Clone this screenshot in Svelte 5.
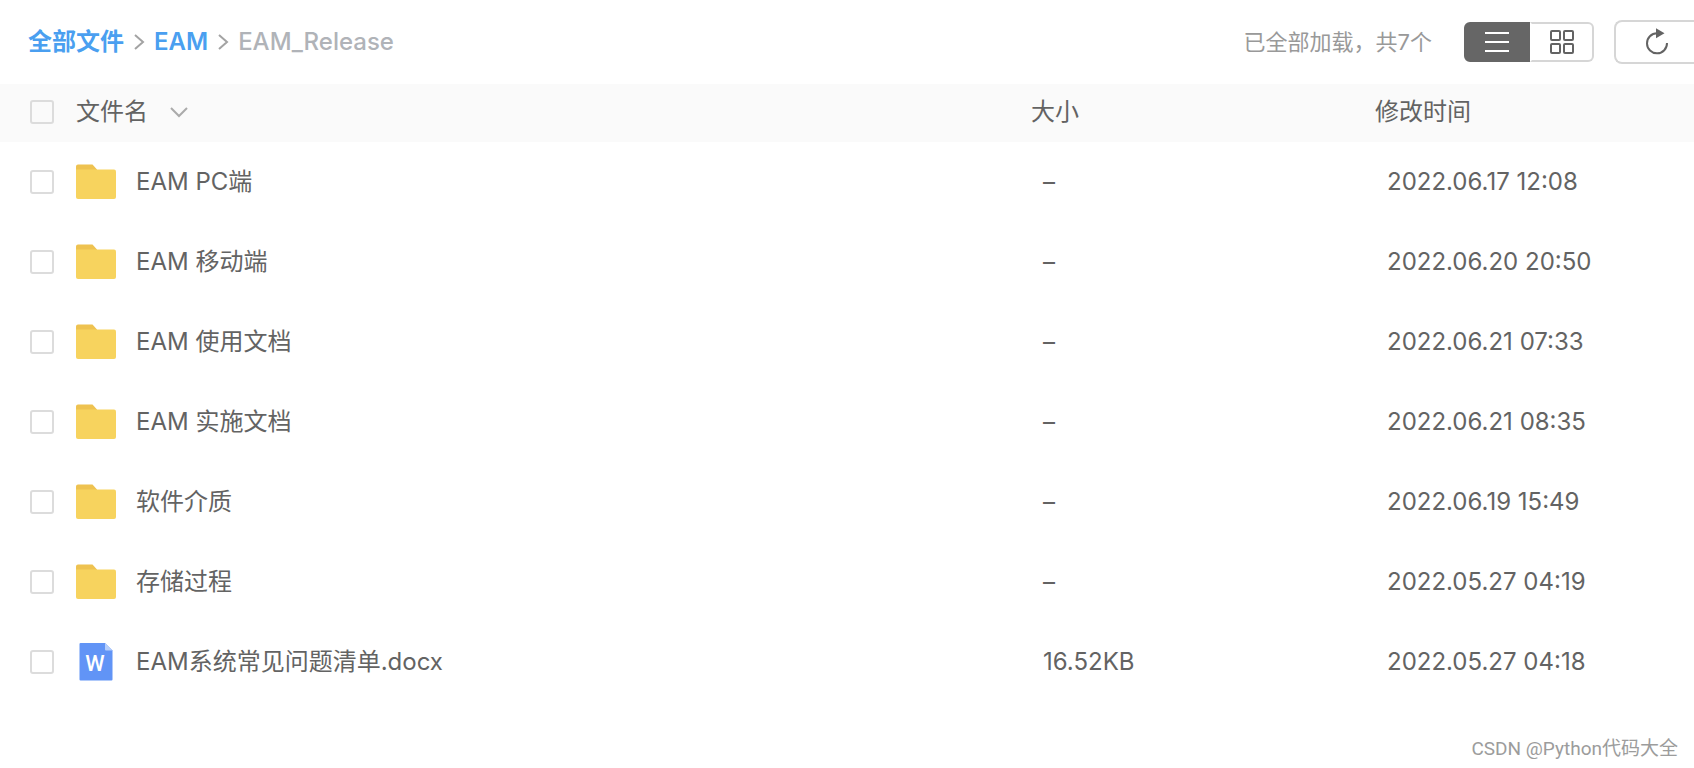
<!--
  Cloud drive folder view: breadcrumb and view controls on top,
  then a selectable table of folders and files.
-->
<script lang="ts">
  type Entry = { name: string; kind: 'folder' | 'doc'; size: string; modified: string };

  const entries: Entry[] = [
    { name: 'EAM PC端', kind: 'folder', size: '–', modified: '2022.06.17 12:08' },
    { name: 'EAM 移动端', kind: 'folder', size: '–', modified: '2022.06.20 20:50' },
    { name: 'EAM 使用文档', kind: 'folder', size: '–', modified: '2022.06.21 07:33' },
    { name: 'EAM 实施文档', kind: 'folder', size: '–', modified: '2022.06.21 08:35' },
    { name: '软件介质', kind: 'folder', size: '–', modified: '2022.06.19 15:49' },
    { name: '存储过程', kind: 'folder', size: '–', modified: '2022.05.27 04:19' },
    { name: 'EAM系统常见问题清单.docx', kind: 'doc', size: '16.52KB', modified: '2022.05.27 04:18' },
  ];

  let view = $state('list');
  let selected = $state(entries.map(() => false));
  const allSelected = $derived(selected.every(Boolean));

  function toggleAll() {
    const next = !allSelected;
    selected = entries.map(() => next);
  }
</script>

{#snippet separator()}
  <svg class="sep" viewBox="0 0 12 16" width="12" height="16" aria-hidden="true"><path d="M2 1l8 7-8 7" /></svg>
{/snippet}

<div class="page">
  <header class="toolbar">
    <nav class="crumbs">
      <a href="#all">全部文件</a>
      {@render separator()}
      <a href="#eam">EAM</a>
      {@render separator()}
      <span class="current">EAM_Release</span>
    </nav>

    <span class="status">已全部加载，共{entries.length}个</span>

    <div class="views">
      <button type="button" class:active={view === 'list'} aria-label="列表" onclick={() => (view = 'list')}>
        <svg viewBox="0 0 24 24" width="24" height="24" aria-hidden="true"><path d="M0 3h24M0 12h24M0 21h24" /></svg>
      </button>
      <button type="button" class:active={view === 'grid'} aria-label="网格" onclick={() => (view = 'grid')}>
        <svg viewBox="0 0 24 24" width="24" height="24" aria-hidden="true">
          <rect x="1" y="1" width="9" height="9" rx="1" />
          <rect x="14" y="1" width="9" height="9" rx="1" />
          <rect x="1" y="14" width="9" height="9" rx="1" />
          <rect x="14" y="14" width="9" height="9" rx="1" />
        </svg>
      </button>
    </div>

    <button type="button" class="refresh" aria-label="刷新">
      <svg viewBox="0 0 24 28" width="24" height="28" aria-hidden="true">
        <path d="M12 5.3a10 10 0 1 0 10 9.700" />
        <path class="tip" d="M11 0.300l8.500 5-8.500 4.900z" />
      </svg>
    </button>
  </header>

  <table>
    <colgroup>
      <col class="col-check" />
      <col />
      <col class="col-size" />
      <col class="col-time" />
    </colgroup>
    <thead>
      <tr>
        <th class="check"><input type="checkbox" aria-label="全选" checked={allSelected} onchange={toggleAll} /></th>
        <th>
          <button type="button" class="sort">
            文件名
            <svg viewBox="0 0 18 12" width="18" height="12" aria-hidden="true"><path d="M1 2l8 8 8-8" /></svg>
          </button>
        </th>
        <th>大小</th>
        <th>修改时间</th>
      </tr>
    </thead>
    <tbody>
      {#each entries as entry, i (entry.name)}
        <tr>
          <td class="check"><input type="checkbox" aria-label={entry.name} bind:checked={selected[i]} /></td>
          <td>
            <div class="name">
              {#if entry.kind === 'folder'}
                <svg viewBox="0 0 40 40" width="40" height="40" aria-hidden="true">
                  <path fill="#eec250" d="M0 4.5a2 2 0 0 1 2-2h14.5l4.5 5v6H0z" />
                  <path fill="#f7d35e" d="M0 7.5h38a2 2 0 0 1 2 2V35a2 2 0 0 1-2 2H2a2 2 0 0 1-2-2z" />
                </svg>
              {:else}
                <svg viewBox="0 0 40 40" width="40" height="40" aria-hidden="true">
                  <path fill="#6194f6" d="M4.500 1H29l7.500 7.500v29a1 1 0 0 1-1 1h-31a1 1 0 0 1-1-1V2a1 1 0 0 1 1-1z" />
                  <path fill="#b5cefb" d="M29 1l7.500 7.500H30a1 1 0 0 1-1-1z" />
                  <text x="19" y="29" text-anchor="middle">W</text>
                </svg>
              {/if}
              <span>{entry.name}</span>
            </div>
          </td>
          <td class="meta">{entry.size}</td>
          <td class="meta">{entry.modified}</td>
        </tr>
      {/each}
    </tbody>
  </table>

  <footer>CSDN @Python代码大全</footer>
</div>

<style>
  :global(body) {
    background: #fff;
  }
  .page {
    overflow: hidden;
    color: #636363;
    font: 24px/32px Inter, 'Noto Sans CJK SC', sans-serif;
  }
  button {
    padding: 0;
    border: 0;
    background: none;
    color: inherit;
    font: inherit;
    cursor: pointer;
  }
  svg {
    flex: none;
    fill: none;
    stroke-width: 2;
  }

  .toolbar {
    display: flex;
    align-items: center;
    height: 84px;
    padding-left: 28px;
  }
  .crumbs {
    display: flex;
    align-items: center;
    gap: 9px;
    margin-right: auto;
    font-weight: 600;
  }
  .crumbs a {
    color: #4a9ff0;
    text-decoration: none;
  }
  .crumbs .current {
    color: #b0b3b8;
    font-weight: 500;
  }
  .sep {
    stroke: #a3a3a3;
  }
  .status {
    margin-right: 32px;
    color: #999;
    font-size: 22px;
  }

  .views {
    display: flex;
    margin-right: 20px;
  }
  .views button {
    display: flex;
    align-items: center;
    justify-content: center;
    box-sizing: border-box;
    width: 64px;
    height: 40px;
    border: 2px solid #d6d6d6;
  }
  .views button:first-child {
    width: 66px;
    border-radius: 6px 0 0 6px;
  }
  .views button:last-child {
    border-left-color: transparent;
    border-radius: 0 6px 6px 0;
  }
  .views .active {
    border-color: #666;
    background: #666;
    color: #fff;
  }
  .views svg,
  .refresh svg {
    stroke: currentColor;
  }

  /* The refresh button runs on past the right edge of the pane. */
  .refresh {
    box-sizing: border-box;
    width: 88px;
    height: 44px;
    margin-right: -8px;
    padding-left: 29px;
    border: 2px solid #d6d6d6;
    border-right: 0;
    border-radius: 8px 0 0 8px;
    text-align: left;
  }
  .refresh svg {
    display: block;
  }
  .refresh .tip {
    fill: currentColor;
    stroke: none;
  }

  table {
    width: 100%;
    border-collapse: collapse;
    table-layout: fixed;
  }
  .col-check {
    width: 76px;
  }
  .col-size {
    width: 344px;
  }
  .col-time {
    width: 319px;
  }
  th,
  td {
    padding: 0;
    font-weight: 400;
    text-align: left;
    white-space: nowrap;
  }
  th {
    height: 56px;
    padding-bottom: 2px;
    background: #fafafa;
  }
  td {
    height: 80px;
  }
  .check {
    padding-left: 30px;
  }
  .meta {
    padding-left: 12px;
  }
  input {
    display: block;
    appearance: none;
    box-sizing: border-box;
    width: 24px;
    height: 24px;
    margin: 0;
    border: 2px solid #dcdcdc;
    border-radius: 3px;
  }
  input:checked {
    border-color: #4a9ff0;
    background: #4a9ff0;
  }
  .sort {
    display: flex;
    align-items: center;
    gap: 22px;
  }
  .sort svg {
    stroke: #aaa;
  }
  .name {
    display: flex;
    align-items: center;
    gap: 20px;
  }
  .name text {
    fill: #fff;
    font: 500 22px Roboto, sans-serif;
  }

  footer {
    padding: 35px 16px 7px;
    color: #9c9c9c;
    font: 19px/24px Roboto, 'Noto Sans CJK SC', sans-serif;
    text-align: right;
  }
</style>
